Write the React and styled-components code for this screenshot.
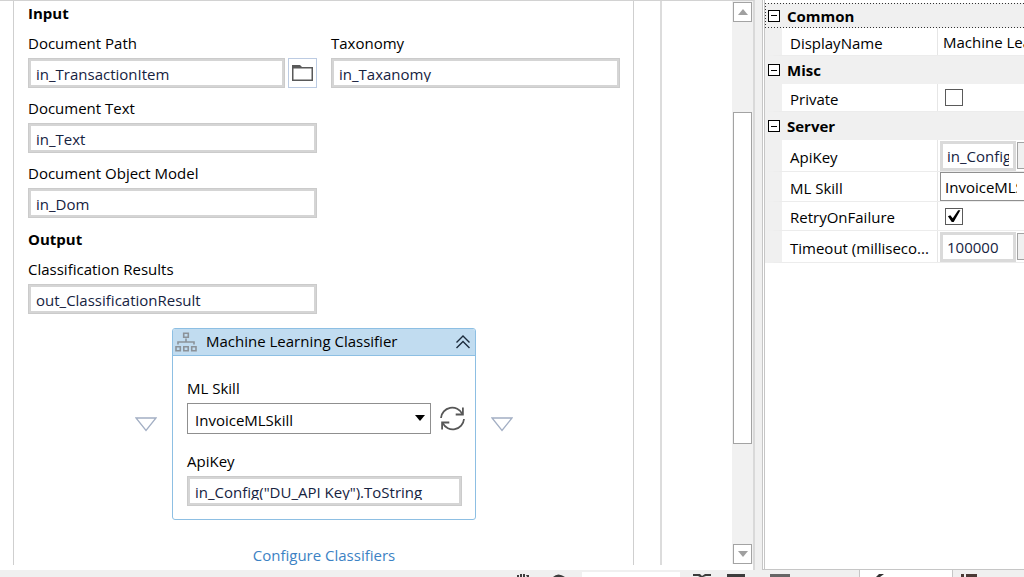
import React, { useState } from 'react';
import styled, { createGlobalStyle } from 'styled-components';

const GlobalStyle = createGlobalStyle`
  * {
    box-sizing: border-box;
  }

  body {
    margin: 0;
    overflow: hidden;
    background-color: #ffffff;
    color: #000000;
    font-family: 'Open Sans', 'Noto Sans', sans-serif;
    font-size: 15px;
    line-height: 22px;
  }

  button, input, select {
    margin: 0;
    font: inherit;
  }
`;

const Shell = styled.div`
  display: grid;
  grid-template-columns: minmax(0, 1fr) 262px;
  grid-template-rows: minmax(0, 1fr) 7px;
  height: 100vh;
  background-color: #f0f0f0;
`;

/* designer */

const DesignerPane = styled.main`
  display: flex;
  margin-right: 7px;
  border-top: 1px solid #d2d2d2;
  border-right: 2px solid #d9d9d9;
  background-color: #ffffff;
  overflow: hidden;
`;

const Canvas = styled.div`
  flex: 1;
  display: flex;
  padding: 0 70px 5px 0;
`;

const Sequence = styled.div`
  flex: 1;
  display: flex;
  padding: 0 26px 0 13px;
  border-right: 2px solid #dcdcdc;
`;

const Activity = styled.section`
  flex: 1;
  padding: 1px 13px 0 14px;
  border-left: 1px solid #cfcfcf;
  border-right: 1px solid #cfcfcf;
`;

const GroupTitle = styled.h2`
  margin: 0 0 9px;
  font-size: 15px;
  font-weight: 700;
  line-height: 22px;
`;

const FieldGrid = styled.div`
  display: grid;
  grid-template-columns: 1fr 1fr;
  gap: 10px 14px;
  margin-bottom: ${(props) => props.$after};
`;

const FieldBlock = styled.div`
  grid-column: ${(props) => props.$column || 'auto'};
`;

const FieldLabel = styled.label`
  display: block;
  margin-bottom: 5px;
  line-height: 20px;
`;

const FieldLine = styled.div`
  display: flex;
  gap: 3px;
`;

const FieldFrame = styled.div`
  flex: 1;
  display: flex;
  height: 30px;
  padding: 0 5px 3px;
  border: 3px solid #d5d5d5;
  outline: 1px solid #cbcbcb;
  outline-offset: -1px;
`;

const FieldInput = styled.input`
  width: 100%;
  min-width: 0;
  height: 21px;
  padding: 5px 0 0;
  border: none;
  outline: none;
  background: transparent;
  color: #16233f;
  line-height: 16px;
`;

const BrowseButton = styled.button`
  display: flex;
  align-items: center;
  justify-content: center;
  width: 29px;
  height: 30px;
  padding: 0;
  border: 1px solid #bccbe2;
  background-color: #ffffff;
`;

/* classifier card */

const ClassifierRow = styled.div`
  display: flex;
  align-items: center;
  justify-content: center;
  gap: 15px;
`;

const Card = styled.section`
  width: 304px;
  border: 1px solid #8dbfe3;
  border-radius: 3px;
  overflow: hidden;
`;

const CardHeader = styled.header`
  display: flex;
  align-items: center;
  height: 27px;
  padding: 0 4px 0 2px;
  border-bottom: 1px solid #8dbfe3;
  background-color: #c1dcf0;
`;

const CardTitle = styled.h3`
  flex: 1;
  margin: 0 0 2px 9px;
  font-size: 15px;
  font-weight: 400;
`;

const IconButton = styled.button`
  display: flex;
  padding: 0;
  border: none;
  background: transparent;
`;

const CardBody = styled.div`
  display: flex;
  flex-direction: column;
  gap: 17px;
  padding: 22px 13px 13px 14px;
`;

const SkillLine = styled.div`
  display: flex;
  align-items: center;
  gap: 9px;
  margin-right: -3px;
`;

const SelectWrap = styled.div`
  position: relative;
  display: flex;
  flex: 1;
  height: 31px;

  svg {
    position: absolute;
    top: 12px;
    right: 6px;
    pointer-events: none;
  }
`;

const Select = styled.select`
  width: 100%;
  padding: 2px 22px 0 ${(props) => props.$indent};
  border: 1px solid #8f8f8f;
  border-radius: 0;
  outline: none;
  background-color: #ffffff;
  color: #000000;
  appearance: none;
`;

const LinkLine = styled.div`
  margin-top: 25px;
  line-height: 20px;
  text-align: center;
`;

const ConfigureLink = styled.a`
  color: #3c82c4;
  text-decoration: none;
`;

/* scrollbar */

const ScrollBar = styled.div`
  display: flex;
  flex-direction: column;
  width: 21px;
  padding: 1px 1px 0 1px;
  margin-bottom: 6px;
  background-color: #f1f1f1;
`;

const ScrollButton = styled.button`
  display: flex;
  align-items: center;
  justify-content: center;
  height: 20px;
  padding: 0;
  border: 1px solid #a3a3a3;
  background-color: #ffffff;
`;

const Track = styled.div`
  flex: 1;
  display: flex;
  padding: 90px 0 100px;
`;

const Thumb = styled.div`
  flex: 1;
  border: 1px solid #a3a3a3;
  background-color: #ffffff;
`;

/* properties */

const Properties = styled.aside`
  display: flex;
  flex-direction: column;
  border-left: 3px double #c6c6c6;
  border-bottom: 1px solid #c6c6c6;
  background-color: #ffffff;
  overflow: hidden;
`;

const Category = styled.h2`
  display: flex;
  align-items: center;
  gap: 7px;
  height: 28px;
  margin: 0;
  padding: 0 0 0 3px;
  background-color: #f0f0f0;
  font-size: 15px;
  font-weight: 700;
`;

const FocusedCategory = styled(Category)`
  height: 25px;
  margin-top: 3px;
  background-image:
    repeating-linear-gradient(90deg, #333333 0 1px, transparent 1px 3px),
    repeating-linear-gradient(90deg, #333333 0 1px, transparent 1px 3px),
    repeating-linear-gradient(180deg, #333333 0 1px, transparent 1px 3px);
  background-position: left top, left bottom, left top;
  background-repeat: no-repeat;
  background-size: 100% 1px, 100% 1px, 1px 100%;
`;

const Toggle = styled.button`
  display: flex;
  align-items: center;
  justify-content: center;
  width: 12px;
  height: 12px;
  padding: 0;
  border: 1px solid #000000;
  background-color: #ffffff;
`;

const ToggleDash = styled.span`
  width: 6px;
  height: 1px;
  background-color: #000000;
`;

const PropertyRow = styled.div`
  display: grid;
  grid-template-columns: 156px minmax(0, 1fr);
  height: ${(props) => props.$height};
  border-left: 17px solid #f0f0f0;
  border-bottom: 1px solid #ececec;
`;

const PropertyName = styled.label`
  display: flex;
  align-items: center;
  padding: 2px 0 0 8px;
  border-right: 1px solid #e6e6e6;
  white-space: nowrap;
  overflow: hidden;
`;

const PropertyValue = styled.div`
  display: flex;
  align-items: center;
  padding-left: 2px;
  overflow: hidden;
`;

const PlainInput = styled.input`
  flex: none;
  width: 200px;
  padding: 0 0 0 3px;
  border: none;
  outline: none;
  background: transparent;
  color: #000000;
`;

const ValueInput = styled.input`
  flex: none;
  width: 76px;
  height: 30px;
  padding: 0 4px;
  border: 3px solid #dadada;
  outline: none;
  color: #16233f;
`;

const MoreButton = styled.button`
  flex: none;
  width: 30px;
  height: 27px;
  margin-left: 1px;
  padding: 0 10px;
  border: 1px solid #a3a3a3;
  background-color: #f0f0f0;
`;

const SkillSelect = styled(Select)`
  flex: none;
  width: 100px;
  height: 29px;
  padding-top: 0;
`;

const CheckBox = styled.input`
  width: 18px;
  height: 17px;
  margin-left: 5px;
  border: 1px solid #5a5a5a;
  background-color: #ffffff;
  appearance: none;

  &:checked::after {
    content: '';
    display: block;
    width: 16px;
    height: 15px;
    background-color: #000000;
    clip-path: polygon(12% 52%, 27% 45%, 42% 65%, 76% 12%, 90% 12%, 48% 90%, 36% 90%);
  }
`;

/* bottom strip */

const StatusBar = styled.footer`
  display: flex;
  justify-content: flex-end;
  align-items: flex-end;
  padding-right: 17px;
  overflow: hidden;
`;

const ZoomBox = styled.div`
  width: 98px;
  height: 5px;
  margin: 0 13px 0 14px;
  background-color: #ffffff;
`;

const DockTabs = styled.nav`
  display: flex;
  overflow: hidden;
`;

const DockTab = styled.button`
  flex: none;
  display: flex;
  align-items: flex-end;
  width: ${(props) => props.$width};
  padding: 0 0 0 8px;
  border: none;
  border-right: 1px solid #c6c6c6;
  background-color: ${(props) => (props.$active ? '#ffffff' : '#f0f0f0')};
`;

function ArrowDown({ color }) {
  return (
    <svg width="10" height="6" viewBox="0 0 10 6" aria-hidden="true">
      <path d="M0 0h10L5 6z" fill={color} />
    </svg>
  );
}

function ArrowUp({ color }) {
  return (
    <svg width="10" height="6" viewBox="0 0 10 6" aria-hidden="true">
      <path d="M0 6h10L5 0z" fill={color} />
    </svg>
  );
}

function DropMarker() {
  return (
    <svg width="22" height="15" viewBox="0 0 22 15" aria-hidden="true">
      <path d="M1 1h20L11 13.5z" fill="#fff" stroke="#a3afc4" strokeWidth="1.3" />
    </svg>
  );
}

function FolderIcon() {
  return (
    <svg width="21" height="16" viewBox="0 0 21 16" aria-hidden="true">
      <path d="M0 0h8l2 2H21V16H0z" fill="#595959" />
      <path d="M1.5 3.5h18v11h-18z" fill="#fff" />
    </svg>
  );
}

function TreeIcon() {
  return (
    <svg width="22" height="20" viewBox="0 0 22 20" fill="none" stroke="#8b9299" strokeWidth="1.6" aria-hidden="true">
      <path d="M8.7 1.2h4.6v4.1H8.7zM11 6.5v3.5M3 12.5V10h16v2.5" />
      <path d="M1 14.7h4.3v4H1zM8.8 14.7h4.4v4H8.8zM16.7 14.7H21v4h-4.3z" />
    </svg>
  );
}

function CollapseIcon() {
  return (
    <svg width="16" height="14" viewBox="0 0 16 14" fill="none" stroke="#1c2b3c" strokeWidth="1.4" aria-hidden="true">
      <path d="M1.5 7.5L8 1l6.5 6.5M1.5 13L8 6.5l6.5 6.5" />
    </svg>
  );
}

function RefreshIcon() {
  return (
    <svg width="25" height="25" viewBox="0 0 25 25" fill="none" stroke="#575757" strokeWidth="1.8" aria-hidden="true">
      <path d="M1 12A11.3 11.3 0 0 1 22.3 7.8M24 13A11.3 11.3 0 0 1 2.7 17.2" />
      <path d="M22.9 1.5v7h-7.2M2.1 23.5v-7h7.2" />
    </svg>
  );
}

function Field({ id, label, value, column, children }) {
  return (
    <FieldBlock $column={column}>
      <FieldLabel htmlFor={id}>{label}</FieldLabel>
      <FieldLine>
        <FieldFrame>
          <FieldInput id={id} defaultValue={value} />
        </FieldFrame>
        {children}
      </FieldLine>
    </FieldBlock>
  );
}

function Property({ id, name, height, children }) {
  return (
    <PropertyRow $height={height}>
      <PropertyName htmlFor={id}>{name}</PropertyName>
      <PropertyValue>{children}</PropertyValue>
    </PropertyRow>
  );
}

function PropertyGroup({ title, focused, children }) {
  const [open, setOpen] = useState(true);
  const Heading = focused ? FocusedCategory : Category;

  return (
    <section>
      <Heading>
        <Toggle aria-label={title} aria-expanded={open} onClick={() => setOpen(!open)}>
          <ToggleDash />
        </Toggle>
        {title}
      </Heading>
      {open && children}
    </section>
  );
}

function Classifier() {
  return (
    <ClassifierRow>
      <DropMarker />
      <Card>
        <CardHeader>
          <TreeIcon />
          <CardTitle>Machine Learning Classifier</CardTitle>
          <IconButton aria-label="Collapse">
            <CollapseIcon />
          </IconButton>
        </CardHeader>
        <CardBody>
          <div>
            <FieldLabel htmlFor="skill">ML Skill</FieldLabel>
            <SkillLine>
              <SelectWrap>
                <Select id="skill" $indent="7px">
                  <option>InvoiceMLSkill</option>
                </Select>
                <ArrowDown color="#000000" />
              </SelectWrap>
              <IconButton aria-label="Refresh">
                <RefreshIcon />
              </IconButton>
            </SkillLine>
          </div>
          <Field id="key" label="ApiKey" value={'in_Config("DU_API Key").ToString'} />
        </CardBody>
      </Card>
      <DropMarker />
    </ClassifierRow>
  );
}

function Designer() {
  return (
    <DesignerPane>
      <Canvas>
        <Sequence>
          <Activity>
            <GroupTitle>Input</GroupTitle>
            <FieldGrid $after="10px">
              <Field id="path" label="Document Path" value="in_TransactionItem">
                <BrowseButton aria-label="Browse">
                  <FolderIcon />
                </BrowseButton>
              </Field>
              <Field id="taxonomy" label="Taxonomy" value="in_Taxanomy" />
              <Field id="text" label="Document Text" value="in_Text" column="1" />
              <Field id="dom" label="Document Object Model" value="in_Dom" column="1" />
            </FieldGrid>

            <GroupTitle>Output</GroupTitle>
            <FieldGrid $after="14px">
              <Field id="results" label="Classification Results" value="out_ClassificationResult" />
            </FieldGrid>

            <Classifier />

            <LinkLine>
              <ConfigureLink href="#classifiers">Configure Classifiers</ConfigureLink>
            </LinkLine>
          </Activity>
        </Sequence>
      </Canvas>

      <ScrollBar>
        <ScrollButton aria-label="Scroll up">
          <ArrowUp color="#a0a0a0" />
        </ScrollButton>
        <Track>
          <Thumb />
        </Track>
        <ScrollButton aria-label="Scroll down">
          <ArrowDown color="#a0a0a0" />
        </ScrollButton>
      </ScrollBar>
    </DesignerPane>
  );
}

function App() {
  return (
    <>
      <GlobalStyle />
      <Shell>
        <Designer />

        <Properties>
          <PropertyGroup title="Common" focused>
            <Property id="displayName" name="DisplayName" height="28px">
              <PlainInput id="displayName" defaultValue="Machine Learning Classifier" />
            </Property>
          </PropertyGroup>
          <PropertyGroup title="Misc">
            <Property id="private" name="Private" height="28px">
              <CheckBox id="private" type="checkbox" />
            </Property>
          </PropertyGroup>
          <PropertyGroup title="Server">
            <Property id="apiKey" name="ApiKey" height="32px">
              <ValueInput id="apiKey" defaultValue="in_Config" />
              <MoreButton aria-label="Edit ApiKey" />
            </Property>
            <Property id="mlSkill" name="ML Skill" height="30px">
              <SkillSelect id="mlSkill" $indent="4px">
                <option>InvoiceMLSkill</option>
              </SkillSelect>
            </Property>
            <Property id="retry" name="RetryOnFailure" height="29px">
              <CheckBox id="retry" type="checkbox" defaultChecked />
            </Property>
            <Property id="timeout" name="Timeout (milliseco..." height="32px">
              <ValueInput id="timeout" defaultValue="100000" />
              <MoreButton aria-label="Edit Timeout" />
            </Property>
          </PropertyGroup>
        </Properties>

        <StatusBar>
          <svg width="54" height="3" viewBox="0 0 54 3" fill="#3c3c3c" aria-hidden="true">
            <path d="M3 1h2v2H3zM6 0h2v3H6zM9 0h2v3H9zM12 1h3v2h-2zM39 3q5-5 12 0z" />
          </svg>
          <ZoomBox />
          <svg width="52" height="3" viewBox="0 0 52 3" fill="#3c3c3c" aria-hidden="true">
            <path d="M0 0h7l2 2 3-2h6v2h-5l-3 1H7L5 2H0zM34 0h18v3H34z" />
          </svg>
        </StatusBar>

        <DockTabs>
          <DockTab $width="98px" aria-label="Properties">
            <svg width="20" height="3" viewBox="0 0 20 3" aria-hidden="true">
              <path d="M0 0h20v3H0z" fill="#666" />
            </svg>
          </DockTab>
          <DockTab $width="93px" $active aria-label="Outline">
            <svg width="24" height="3" viewBox="0 0 24 3" aria-hidden="true">
              <path d="M8 3l3-3h5l-4 3z" fill="#333" />
            </svg>
          </DockTab>
          <DockTab $width="80px" aria-label="Resources">
            <svg width="16" height="3" viewBox="0 0 16 3" aria-hidden="true">
              <path d="M0 0h3v3H0zM5 0h11v3H5z" fill="#4a3a36" />
            </svg>
          </DockTab>
        </DockTabs>
      </Shell>
    </>
  );
}

export default App;
